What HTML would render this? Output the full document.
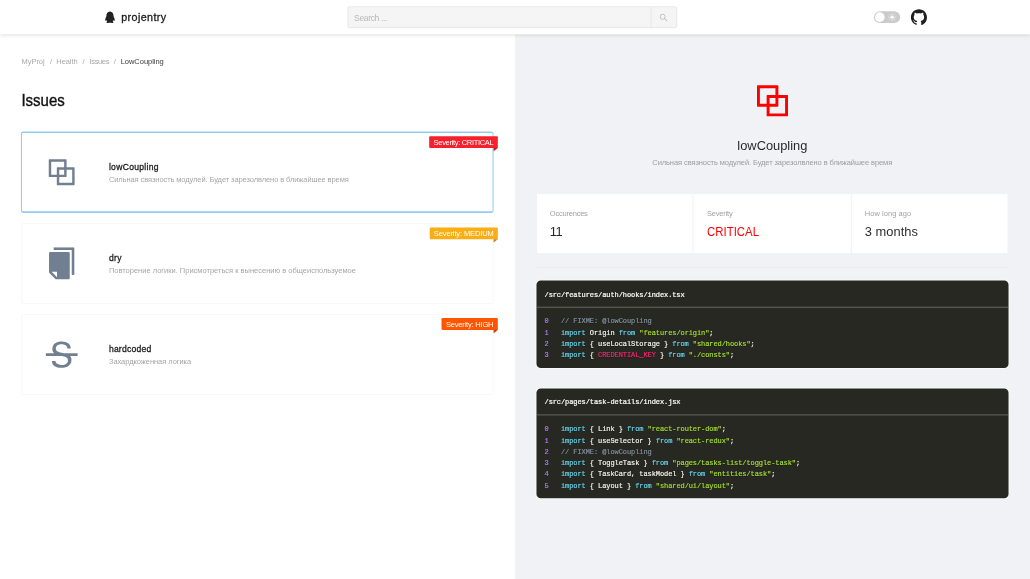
<!DOCTYPE html>
<html lang="en">
<head>
<meta charset="utf-8">
<title>projentry</title>
<style>
*{box-sizing:border-box;margin:0;padding:0}
html,body{width:1030px;height:579px;overflow:hidden;background:#fff}
body{font-family:"Liberation Sans",sans-serif;color:rgba(0,0,0,.85)}
#stage{position:absolute;left:0;top:0;width:1920px;height:1080px;transform:scale(.5364583);transform-origin:0 0;background:#fff;overflow:hidden}
.abs{position:absolute}
.t{position:absolute;white-space:nowrap;line-height:1}
svg{display:block}
/* header */
#header{position:absolute;left:0;top:0;width:1920px;height:64px;background:#fff;box-shadow:0 2px 8px rgba(0,0,0,.19);z-index:5}
#right{position:absolute;left:960px;top:64px;width:960px;height:1016px;background:#f0f2f5}
#search{position:absolute;left:648px;top:12px;width:614px;height:40px;background:#f5f5f5;border:1px solid #d9d9d9;border-radius:3px}
#search .sep{position:absolute;left:564px;top:0;width:1px;height:38px;background:#d9d9d9}
#switch{position:absolute;left:1629px;top:20.8px;width:49px;height:22px;border-radius:11px;background:#cbcbcb}
#switch .knob{position:absolute;left:2px;top:2px;width:18px;height:18px;border-radius:9px;background:#fff}
/* cards */
.card{position:absolute;left:40px;width:880px;height:150px;background:#fff;border:1px solid #f0f0f0;border-radius:2px}
.card.sel{border:2px solid #95ccf4;border-width:3px 2px;border-radius:4px;height:152px}
.ribbon{position:absolute;height:22px;right:992px;color:#fff;font-size:14px;border-radius:2px 2px 0 2px}
.ribbon i{position:absolute;right:0;top:22px;width:0;height:0;border-top:6px solid;border-right:8px solid transparent;filter:brightness(.75)}
.ctitle{font-size:16px;font-weight:400;color:rgba(0,0,0,.85);-webkit-text-stroke:.55px rgba(0,0,0,.85)}
.cdesc{font-size:14px;color:rgba(0,0,0,.38)}
/* stats */
.stat{position:absolute;top:361.5px;height:110.5px;background:#fff}
.slabel{font-size:14px;color:rgba(0,0,0,.4)}
.sval{font-size:24px;color:rgba(0,0,0,.85)}
/* code */
.code{position:absolute;left:1000px;width:880px;background:#272822;border-radius:8px;box-shadow:0 0 0 1.500px rgba(255,255,255,.85);font-family:"Liberation Mono",monospace;color:#f8f8f2}
.code .hd{height:50px;border-bottom:1px solid #9a9b96;position:relative}
.code .hd span{position:absolute;left:15px;top:20px;font-size:13px;font-weight:400;-webkit-text-stroke:.45px #f8f8f2;letter-spacing:-.12px;line-height:1;white-space:pre}
.code pre{font-family:"Liberation Mono",monospace;font-size:13px;letter-spacing:-.12px;line-height:21px;padding:16px 15px 13px;white-space:pre;text-shadow:0 1px rgba(0,0,0,.3);-webkit-text-stroke-width:.3px}
.n{color:#ae81ff}.k{color:#66d9ef}.s{color:#a6e22e}.c{color:#8292a2}.p{color:#f92672}
</style>
</head>
<body>
<div id="stage">

<div id="right"></div>

<div id="header">
  <svg class="abs" style="left:192.5px;top:19.9px" width="24" height="24" viewBox="64 64 896 896" fill="#222"><path d="M824.800 613.200c-16-51.400-34.400-94.600-62.700-165.300C766.500 262.200 689.300 112 511.500 112 331.700 112 256.200 265.200 261 447.900c-28.400 70.800-46.700 113.700-62.700 165.300-34 109.500-23 154.800-14.600 155.800 18 2.200 70.100-82.400 70.100-82.400 0 49 25.200 112.900 79.800 159-26.400 8.100-85.700 29.900-71.600 53.800 11.400 19.300 196.200 12.300 249.500 6.300 53.300 6 238.100 13 249.500-6.300 14.100-23.800-45.300-45.700-71.600-53.800 54.600-46.200 79.800-110.100 79.800-159 0 0 52.100 84.600 70.100 82.400 8.500-1.100 19.500-46.400-14.500-155.800z"/></svg>
  <span class="t" id="t_logo" style="letter-spacing:0.719px;left:226px;top:22px;font-size:20px;-webkit-text-stroke:.6px rgba(0,0,0,.85)">projentry</span>
  <div id="search">
    <span class="t" id="t_search" style="letter-spacing:-0.698px;left:11px;top:13px;font-size:16px;color:#b8b8b8">Search ...</span>
    <div class="sep"></div>
    <svg class="abs" style="left:580px;top:11.500px" width="16" height="16" viewBox="64 64 896 896" fill="#b5b5b5"><path d="M909.600 854.500L649.900 594.800C690.200 542.700 712 479 712 412c0-80.200-31.300-155.400-87.900-212.100-56.600-56.700-132-87.900-212.100-87.900s-155.500 31.300-212.100 87.900C143.200 256.500 112 331.800 112 412c0 80.100 31.300 155.500 87.900 212.100C256.500 680.800 331.800 712 412 712c67 0 130.600-21.800 182.700-62l259.700 259.600a8.200 8.200 0 0011.600 0l43.600-43.500a8.200 8.200 0 000-11.600zM570.400 570.400C528 612.700 471.800 636 412 636s-116-23.300-158.400-65.600C211.300 528 188 471.800 188 412s23.300-116.100 65.600-158.400C296 211.300 352.200 188 412 188s116.100 23.200 158.400 65.600S636 352.200 636 412s-23.300 116.100-65.600 158.400z"/></svg>
  </div>
  <div id="switch"><div class="knob"></div>
    <svg class="abs" style="left:26px;top:3px" width="16" height="16" viewBox="0 0 16 16"><circle cx="8" cy="8" r="3.1" fill="#fff"/><g stroke="#fff" stroke-width="1.1" stroke-linecap="round"><path d="M8 1v2M8 13v2M1 8h2M13 8h2M3.050 3.050l1.400 1.400M11.550 11.550l1.400 1.400M3.050 12.950l1.400-1.400M11.550 4.450l1.400-1.400"/></g></svg>
  </div>
  <svg class="abs" style="left:1698px;top:17px" width="30" height="30" viewBox="64 64 896 896" fill="#1f1f1f"><path d="M511.600 76.300C264.300 76.200 64 276.400 64 523.500 64 718.900 189.300 885 363.800 946c23.500 5.900 19.900-10.800 19.900-22.200v-77.500c-135.700 15.900-141.200-73.900-150.300-88.900C215 726 171.500 718 184.500 703c30.900-15.900 62.400 4 98.900 57.900 26.400 39.100 77.900 32.500 104 26 5.700-23.500 17.900-44.500 34.700-60.800-140.600-25.200-199.200-111-199.200-213 0-49.500 16.300-95 48.300-131.700-20.400-60.500 1.900-112.300 4.900-120 58.100-5.200 118.500 41.600 123.200 45.300 33-8.900 70.700-13.600 112.900-13.600 42.400 0 80.200 4.900 113.500 13.900 11.300-8.600 67.300-48.800 121.300-43.900 2.900 7.700 24.700 58.300 5.500 118 32.400 36.800 48.900 82.700 48.900 132.300 0 102.200-59 188.100-200 212.900a127.500 127.500 0 0138.100 91v112.500c.8 9 0 17.900 15 17.900 177.100-59.700 304.600-227 304.600-424.100 0-247.200-200.400-447.300-447.500-447.300z"/></svg>
</div>

<!-- breadcrumb -->
<span class="t" id="t_bc1" style="letter-spacing:-0.06px;left:40px;top:107px;font-size:14px;color:rgba(0,0,0,.37)">MyProj</span>
<span class="t" style="left:93px;top:107px;font-size:14px;color:rgba(0,0,0,.37)">/</span>
<span class="t" id="t_bc2" style="letter-spacing:-0.162px;left:105px;top:107px;font-size:14px;color:rgba(0,0,0,.37)">Health</span>
<span class="t" style="left:154px;top:107px;font-size:14px;color:rgba(0,0,0,.37)">/</span>
<span class="t" id="t_bc3" style="letter-spacing:-0.711px;left:167px;top:107px;font-size:14px;color:rgba(0,0,0,.37)">Issues</span>
<span class="t" style="left:212px;top:107px;font-size:14px;color:rgba(0,0,0,.37)">/</span>
<span class="t" id="t_bc4" style="letter-spacing:-0.068px;left:225px;top:107px;font-size:14px;color:rgba(0,0,0,.8)">LowCoupling</span>

<span class="t" id="t_h" style="transform:scaleX(.915);transform-origin:0 0;color:rgba(0,0,0,.92);left:40px;top:172px;font-size:30.5px;-webkit-text-stroke:.8px rgba(0,0,0,.85)">Issues</span>

<!-- card 1 -->
<div class="card sel" style="top:244.5px;left:39.3px;width:880.7px"></div>
<svg class="abs" style="left:85px;top:291px" width="60" height="60" viewBox="64 64 896 896" fill="#708090"><path d="M856 376H648V168c0-8.800-7.200-16-16-16H168c-8.800 0-16 7.200-16 16v464c0 8.800 7.200 16 16 16h208v208c0 8.800 7.200 16 16 16h464c8.800 0 16-7.200 16-16V392c0-8.800-7.200-16-16-16zm-480 16v188H220V220h360v156H392c-8.800 0-16 7.200-16 16zm204 52v136H444V444h136zm224 360H444V648h188c8.800 0 16-7.200 16-16V444h156v360z"/></svg>
<span class="t ctitle" id="t_c1t" style="letter-spacing:0.548px;left:203px;top:304px">lowCoupling</span>
<span class="t cdesc" id="t_c1d" style="letter-spacing:-0.174px;left:203px;top:327px">Сильная связность модулей. Будет зарезолвлено в ближайшее время</span>
<div class="ribbon" style="top:253.6px;background:#f5222d;width:128px;text-align:center"><span class="t" id="t_r1" style="letter-spacing:-0.591px;position:relative;top:3px;display:inline-block">Severity: CRITICAL</span><i style="color:#f5222d"></i></div>

<!-- card 2 -->
<div class="card" style="top:416px"></div>
<svg class="abs" style="left:85px;top:461px" width="60" height="60" viewBox="64 64 896 896" fill="#708090"><path d="M832 64H296c-4.400 0-8 3.600-8 8v56c0 4.400 3.600 8 8 8h496v688c0 4.400 3.600 8 8 8h56c4.400 0 8-3.600 8-8V96c0-17.700-14.300-32-32-32zM704 192H192c-17.700 0-32 14.300-32 32v530.700c0 8.500 3.400 16.600 9.400 22.600l173.300 173.300c2.200 2.200 4.700 4 7.400 5.500v1.900h4.200c3.500 1.300 7.200 2 11 2H704c17.700 0 32-14.300 32-32V224c0-17.700-14.300-32-32-32zM382 896h-.2L232 746.200v-.2h150v150z"/></svg>
<span class="t ctitle" id="t_c2t" style="letter-spacing:0.656px;left:203px;top:474px">dry</span>
<span class="t cdesc" id="t_c2d" style="letter-spacing:-0.018px;left:203px;top:496px">Повторение логики. Присмотреться к вынесению в общеиспользуемое</span>
<div class="ribbon" style="top:423.8px;background:#faad14;width:127px;text-align:center"><span class="t" id="t_r2" style="letter-spacing:-0.214px;position:relative;top:3px;display:inline-block">Severity: MEDIUM</span><i style="color:#faad14"></i></div>

<!-- card 3 -->
<div class="card" style="top:586px"></div>
<svg class="abs" style="left:85px;top:631px" width="60" height="60" viewBox="64 64 896 896" fill="#708090"><path d="M952 474H569.900c-10-2-20.500-4-31.600-6-15.900-2.900-22.200-4.100-30.800-5.800-51.300-10-82.200-20-106.800-34.200-35.100-20.500-52.200-48.300-52.200-85.100 0-37 15.200-67.700 44-89 28.400-21 68.800-32.100 116.800-32.100 54.800 0 97.100 14.400 125.800 42.800 14.600 14.400 25.300 32.100 31.800 52.600 1.300 4.100 2.800 10 4.300 17.800.900 4.800 5.200 8.200 9.900 8.200h72.800c5.600 0 10.100-4.600 10.100-10.100v-1c-.700-6.800-1.300-12.100-2-16-7.300-43.500-28-81.700-59.700-110.300-44.400-40.500-109.700-61.800-188.700-61.800-72.300 0-137.400 18.100-183.300 50.900-25.600 18.400-45.400 41.200-58.600 67.700-13.500 27.100-20.300 58.400-20.300 92.900 0 29.500 5.700 54.500 17.300 76.500 8.300 15.700 19.600 29.500 34.100 42H72c-4.400 0-8 3.600-8 8v60c0 4.400 3.600 8 8 8h433.200c2.100.4 3.900.8 5.900 1.200 30.900 6.200 49.500 10.400 66.600 15.200 23 6.500 40.600 13.300 55.200 21.500 35.800 20.200 53.300 49.200 53.300 89 0 35.300-15.500 66.800-43.600 88.800-30.500 23.900-75.600 36.400-130.500 36.400-43.700 0-80.700-8.500-110.200-25-29.100-16.300-49.100-39.800-59.700-69.500-.800-2.200-1.700-5.200-2.700-9-1.200-4.400-5.300-7.500-9.700-7.500h-79.700c-5.600 0-10.100 4.600-10.100 10.100v1c.2 2.300.4 4.200.6 5.700 6.500 48.800 30.300 88.800 70.700 118.800 47.100 34.800 113.400 53.200 191.800 53.200 84.200 0 154.800-19.800 204.200-57.300 25-18.900 44.200-42.200 57.100-69 13-27.100 19.700-57.900 19.700-91.500 0-31.800-5.800-58.400-17.800-81.400-5.800-11.200-13.100-21.500-21.800-30.800H952c4.400 0 8-3.600 8-8v-60a8 8 0 00-8-8z"/></svg>
<span class="t ctitle" id="t_c3t" style="letter-spacing:0.397px;left:203px;top:644px">hardcoded</span>
<span class="t cdesc" id="t_c3d" style="letter-spacing:-0.108px;left:203px;top:666px">Захардкоженная логика</span>
<div class="ribbon" style="top:592.8px;background:#ff5500;width:105px;text-align:center"><span class="t" id="t_r3" style="letter-spacing:-0.368px;position:relative;top:3px;display:inline-block">Severity: HIGH</span><i style="color:#ff5500"></i></div>

<!-- right panel -->
<svg class="abs" style="left:1404px;top:152px" width="72" height="72" viewBox="64 64 896 896" fill="#ff0000"><path d="M856 376H648V168c0-8.800-7.200-16-16-16H168c-8.800 0-16 7.200-16 16v464c0 8.800 7.200 16 16 16h208v208c0 8.800 7.200 16 16 16h464c8.800 0 16-7.200 16-16V392c0-8.800-7.200-16-16-16zm-480 16v188H220V220h360v156H392c-8.800 0-16 7.200-16 16zm204 52v136H444V444h136zm224 360H444V648h188c8.800 0 16-7.200 16-16V444h156v360z"/></svg>
<span class="t" id="t_rt" style="letter-spacing:-0.023px;left:1374.5px;top:259.5px;font-size:24px">lowCoupling</span>
<span class="t cdesc" id="t_rd" style="letter-spacing:-0.174px;left:1216px;top:295.5px">Сильная связность модулей. Будет зарезолвлено в ближайшее время</span>

<div class="stat" style="left:1000.5px;width:290.3px"></div>
<div class="stat" style="left:1292.8px;width:293.1px"></div>
<div class="stat" style="left:1587.9px;width:290.6px"></div>
<span class="t slabel" id="t_s1l" style="letter-spacing:-0.43px;left:1025px;top:389.7px">Occurences</span>
<span class="t sval" id="t_s1v" style="letter-spacing:-1.259px;left:1025px;top:420px">11</span>
<span class="t slabel" id="t_s2l" style="letter-spacing:-0.386px;left:1318px;top:389.7px">Severity</span>
<span class="t sval" id="t_s2v" style="left:1318px;top:420px;color:#ff0000;transform:scaleX(.885);transform-origin:0 0">CRITICAL</span>
<span class="t slabel" id="t_s3l" style="letter-spacing:0.09px;left:1612px;top:389.7px">How long ago</span>
<span class="t sval" id="t_s3v" style="letter-spacing:0.035px;left:1612px;top:420px">3 months</span>

<div class="abs" style="left:1000px;top:498.2px;width:880px;height:1px;background:rgba(0,0,0,.06)"></div>

<div class="code" style="top:522.5px">
<div class="hd"><span>/src/features/auth/hooks/index.tsx</span></div>
<pre><span class="n">0</span>   <span class="c">// FIXME: @lowCoupling</span>
<span class="n">1</span>   <span class="k">import</span> Origin <span class="k">from</span> <span class="s">"features/origin"</span>;
<span class="n">2</span>   <span class="k">import</span> { useLocalStorage } <span class="k">from</span> <span class="s">"shared/hooks"</span>;
<span class="n">3</span>   <span class="k">import</span> { <span class="p">CREDENTIAL_KEY</span> } <span class="k">from</span> <span class="s">"./consts"</span>;</pre>
</div>

<div class="code" style="top:724.4px">
<div class="hd"><span>/src/pages/task-details/index.jsx</span></div>
<pre><span class="n">0</span>   <span class="k">import</span> { Link } <span class="k">from</span> <span class="s">"react-router-dom"</span>;
<span class="n">1</span>   <span class="k">import</span> { useSelector } <span class="k">from</span> <span class="s">"react-redux"</span>;
<span class="n">2</span>   <span class="c">// FIXME: @lowCoupling</span>
<span class="n">3</span>   <span class="k">import</span> { ToggleTask } <span class="k">from</span> <span class="s">"pages/tasks-list/toggle-task"</span>;
<span class="n">4</span>   <span class="k">import</span> { TaskCard, taskModel } <span class="k">from</span> <span class="s">"entities/task"</span>;
<span class="n">5</span>   <span class="k">import</span> { Layout } <span class="k">from</span> <span class="s">"shared/ui/layout"</span>;</pre>
</div>

</div>
</body>
</html>
